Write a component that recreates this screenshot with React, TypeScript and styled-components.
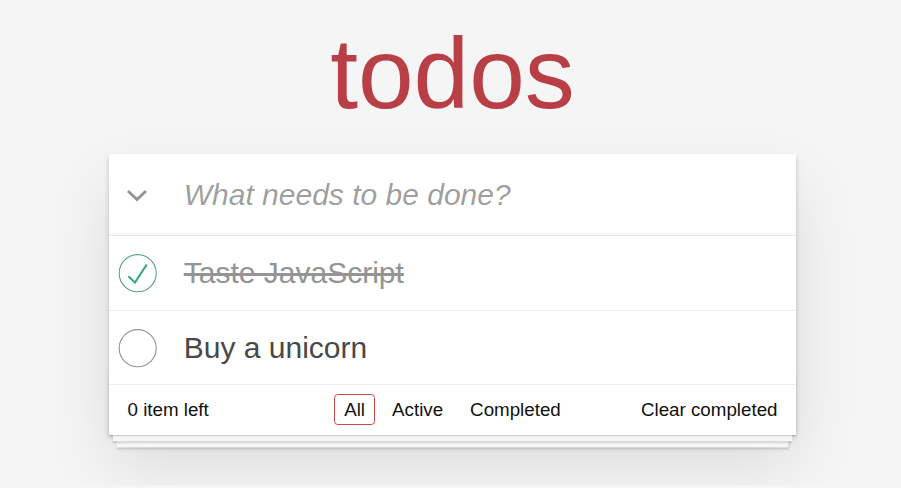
import React from "react";
import styled, { createGlobalStyle } from "styled-components";

// Everything is the classic TodoMVC sizing scaled by 1.25
const GlobalStyle = createGlobalStyle`
  html, body {
    margin: 0;
    padding: 0;
    background: #f5f5f5;
  }
  body {
    font: 17.5px "Liberation Sans", Arial, sans-serif;
    line-height: 24.5px;
    color: #111111;
  }
`;

interface Todo {
  title: string;
  completed: boolean;
}

const todos: Todo[] = [
  { title: "Taste JavaScript", completed: true },
  { title: "Buy a unicorn", completed: false },
];

const filters = ["All", "Active", "Completed"];

const ToggleIcon: React.FC<{ checked: boolean }> = ({ checked }) => (
  <svg width="50" height="50" viewBox="-10 -18 100 135">
    <circle
      cx="50"
      cy="50"
      r="50"
      fill="none"
      stroke={checked ? "#59A193" : "#949494"}
      strokeWidth="3"
    />
    {checked && <path fill="#3EA390" d="M72 25L42 71 27 56l-4 4 20 20 34-52z" />}
  </svg>
);

const App: React.FC = () => {
  return (
    <>
      <GlobalStyle />
      <Page>
        <Column>
          <Title>todos</Title>
          <TodoApp>
            <Header>
              <ToggleAll>
                <svg width="22" height="14" viewBox="0 0 22 14">
                  <polyline
                    points="2,2 11,10.5 20,2"
                    fill="none"
                    stroke="#949494"
                    strokeWidth="3"
                  />
                </svg>
              </ToggleAll>
              <NewTodo placeholder="What needs to be done?" />
            </Header>
            <TodoList>
              {todos.map((todo) => (
                <TodoItem key={todo.title}>
                  <ToggleCell>
                    <ToggleIcon checked={todo.completed} />
                  </ToggleCell>
                  <TodoLabel $completed={todo.completed}>{todo.title}</TodoLabel>
                </TodoItem>
              ))}
            </TodoList>
            <Footer>
              <TodoCount>0 item left</TodoCount>
              <Filters>
                {filters.map((f) => (
                  <FilterItem key={f}>
                    <FilterLink $selected={f === "All"}>{f}</FilterLink>
                  </FilterItem>
                ))}
              </Filters>
              <ClearCompleted>Clear completed</ClearCompleted>
            </Footer>
          </TodoApp>
        </Column>
      </Page>
    </>
  );
};
export default App;

const Page = styled.div`
  display: flex;
  justify-content: center;
  padding: 0 0 50px 4px;
`;

const Column = styled.div`
  width: 687.5px;
  display: flex;
  flex-direction: column;
`;

const Title = styled.h1`
  margin: 23px 0 31px;
  font-size: 100px;
  line-height: 100px;
  font-weight: 200;
  text-align: center;
  color: #b83f45;
`;

const TodoApp = styled.section`
  position: relative;
  background: #fff;
  box-shadow: 0 2.5px 5px 0 rgba(0, 0, 0, 0.2), 0 31.25px 62.5px 0 rgba(0, 0, 0, 0.1);
`;

const Header = styled.header`
  display: flex;
  align-items: center;
  height: 81.25px;
  box-shadow: inset 0 -2.5px 1.25px rgba(0, 0, 0, 0.03);
`;

const ToggleAll = styled.div`
  width: 75px;
  display: flex;
  padding-left: 17px;
  padding-top: 3px;
  box-sizing: border-box;
`;

const NewTodo = styled.input`
  flex: 1;
  border: none;
  outline: none;
  background: transparent;
  padding: 0 20px 0 0;
  font-family: "Liberation Sans", Arial, sans-serif;
  font-size: 30px;
  color: #111;

  &::placeholder {
    font-style: italic;
    font-weight: 400;
    color: rgba(0, 0, 0, 0.4);
  }
`;

const TodoList = styled.ul`
  list-style: none;
  margin: 0;
  padding: 0;
  border-top: 1.25px solid #e6e6e6;
`;

const TodoItem = styled.li`
  display: flex;
  align-items: center;
  border-bottom: 1.25px solid #ededed;
`;

const ToggleCell = styled.div`
  width: 75px;
  flex-shrink: 0;
  display: flex;
  align-items: center;

  svg {
    display: block;
  }
`;

const TodoLabel = styled.label<{ $completed: boolean }>`
  flex: 1;
  padding: 18.75px 18.75px 18.75px 0;
  font-size: 30px;
  line-height: 1.2;
  font-weight: 400;
  color: ${({ $completed }) => ($completed ? "#949494" : "#484848")};
  text-decoration: ${({ $completed }) => ($completed ? "line-through" : "none")};
`;

const Footer = styled.footer`
  position: relative;
  display: flex;
  align-items: center;
  height: 50px;
  box-sizing: border-box;
  padding: 12.5px 18.75px;
  font-size: 18.75px;
  line-height: 24.5px;

  /* the stacked sheets under the card */
  &::before {
    content: "";
    position: absolute;
    right: 0;
    bottom: 0;
    left: 0;
    height: 62.5px;
    pointer-events: none;
    box-shadow: 0 1.25px 1.25px rgba(0, 0, 0, 0.2), 0 10px 0 -3.75px #f6f6f6,
      0 11.25px 1.25px -3.75px rgba(0, 0, 0, 0.2), 0 20px 0 -7.5px #f6f6f6,
      0 21.25px 2.5px -7.5px rgba(0, 0, 0, 0.2);
  }
`;

const TodoCount = styled.span`
  flex: 1;
  text-align: left;
`;

const Filters = styled.ul`
  display: flex;
  margin: 0;
  padding: 0;
  list-style: none;
`;

const FilterItem = styled.li`
  display: inline;
`;

const FilterLink = styled.a<{ $selected: boolean }>`
  margin: 3.75px;
  padding: 3.75px 8.75px;
  color: inherit;
  text-decoration: none;
  border: 1.25px solid ${({ $selected }) => ($selected ? "#CE4646" : "transparent")};
  border-radius: 3.75px;
  cursor: pointer;
`;

const ClearCompleted = styled.button`
  flex: 1;
  text-align: right;
  border: none;
  background: none;
  padding: 0;
  font: inherit;
  color: inherit;
  line-height: 23.75px;
  cursor: pointer;
`;
